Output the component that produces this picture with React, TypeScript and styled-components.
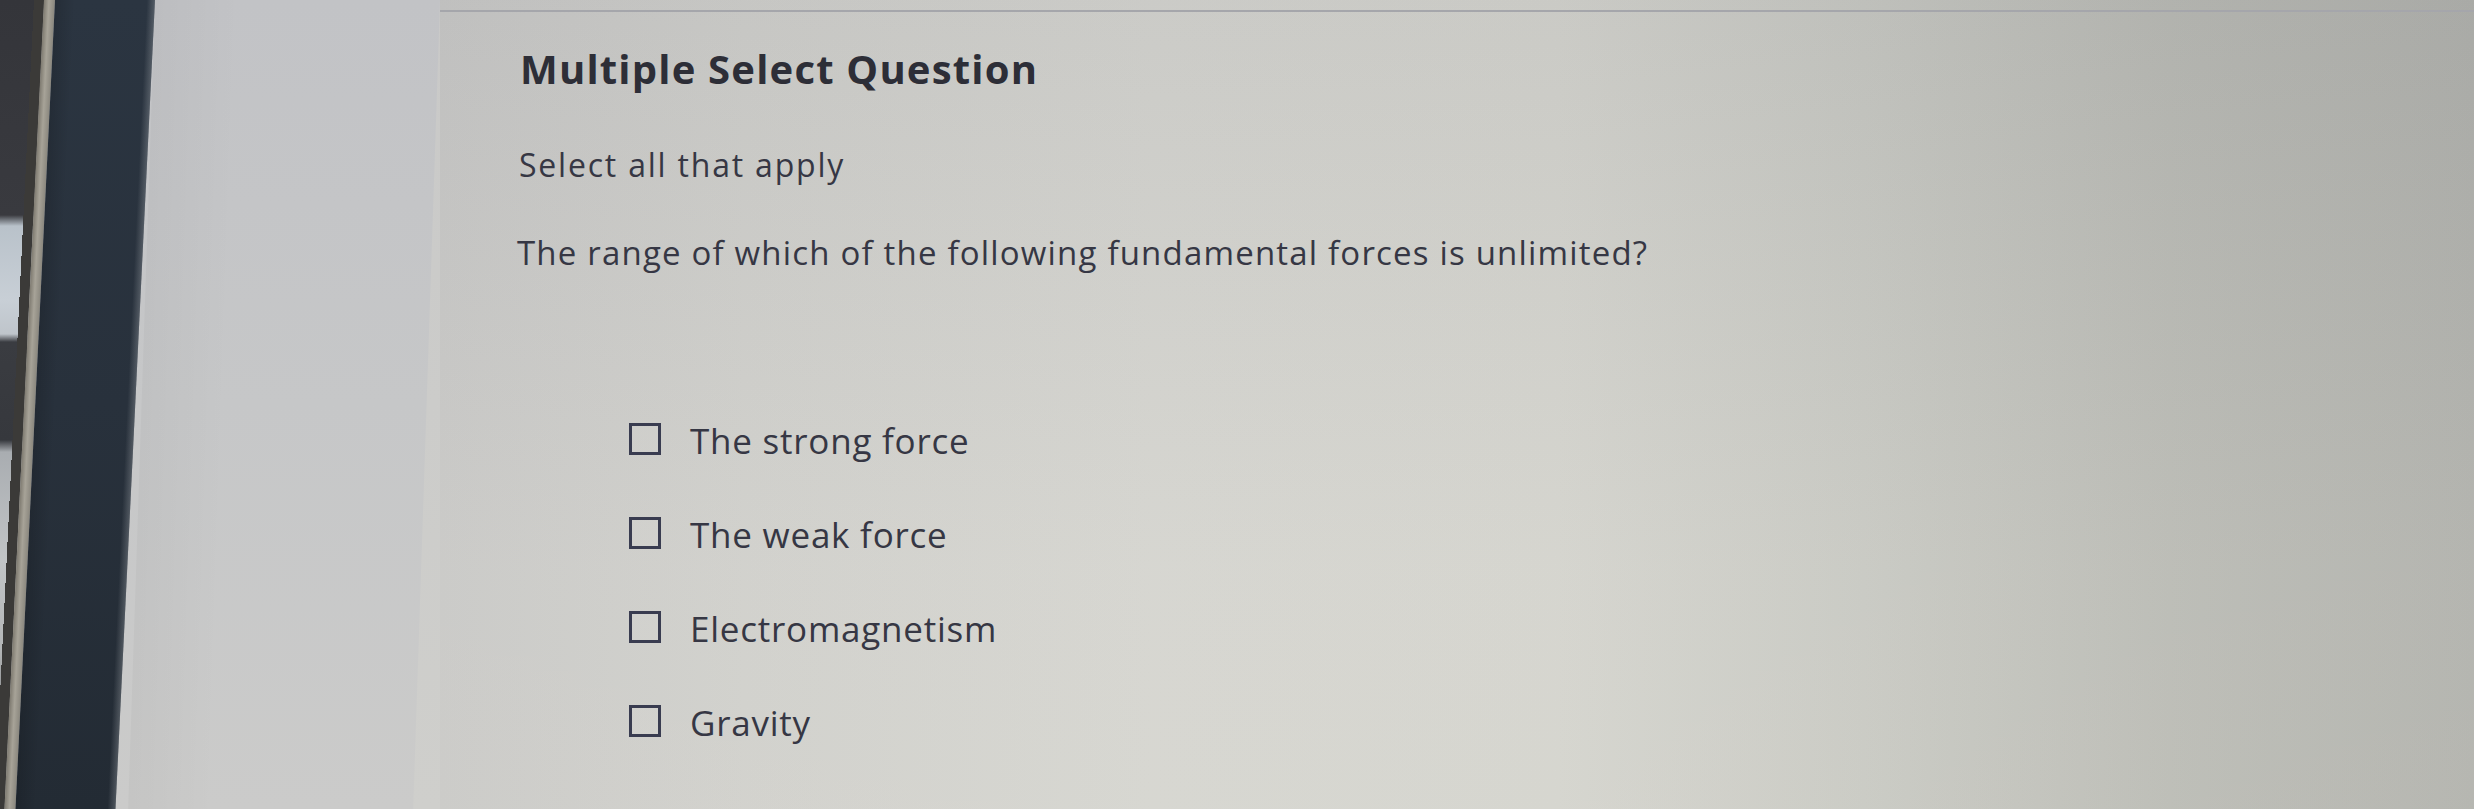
import React from "react";
import styled, { createGlobalStyle } from "styled-components";

const GlobalStyle = createGlobalStyle`
  html, body {
    margin: 0;
    padding: 0;
    width: 2474px;
    height: 809px;
    overflow: hidden;
    background: #cdcdcb;
  }
  #root {
    height: 809px;
  }
`;

const Screen = styled.div`
  display: flex;
  width: 2474px;
  height: 809px;
  overflow: hidden;
  font-family: "Open Sans", "Lato", "Liberation Sans", sans-serif;
`;

const SideFrame = styled.div`
  flex: 0 0 440px;
  height: 809px;
  overflow: hidden;
  background: linear-gradient(to bottom, #c9c9c8 0%, #cfcfcc 100%);
`;

const Panel = styled.div`
  display: flex;
  width: 440px;
  height: 809px;
  transform: skewX(-1.9deg);
  transform-origin: top left;
  background: linear-gradient(to bottom, #c2c3c6 0%, #c6c7c8 50%, #cbcbca 100%);
`;

const Bezel = styled.div`
  display: flex;
  flex: 0 0 155px;
  height: 809px;
  transform: skewX(-0.9deg);
  transform-origin: top left;
`;

const BezelEdge = styled.div`
  flex: 0 0 44px;
  background:
    linear-gradient(to right, transparent 0 34px, #3b3a38 34px 44px),
    linear-gradient(
      to bottom,
      #34353a 0px,
      #393a3f 215px,
      #b9c2ca 226px,
      #c8cfd6 300px,
      #bfc5cb 334px,
      #3a3c41 342px,
      #36383d 440px,
      #a9adb1 452px,
      #c1c4c6 560px,
      #b3b5b6 650px,
      #8d8f91 700px,
      #6d6f72 809px
    );
`;

const BezelStrip = styled.div`
  flex: 0 0 11px;
  background: linear-gradient(to right, #7e7a70 0%, #a7a398 45%, #8a877e 100%);
`;

const BezelBand = styled.div`
  flex: 0 0 100px;
  background:
    linear-gradient(to right, rgba(0, 0, 0, 0.15) 0%, transparent 20%, transparent 92%, rgba(160, 165, 170, 0.35) 100%),
    linear-gradient(to bottom, #2b3541 0%, #28313c 50%, #232b34 100%);
`;

const PanelFill = styled.div`
  flex: 1 1 auto;
  background: linear-gradient(to right, rgba(0, 0, 0, 0.03) 0%, transparent 30%);
`;

const Main = styled.main`
  flex: 1 1 auto;
  height: 809px;
  padding-top: 10px;
  box-sizing: border-box;
  background:
    linear-gradient(to bottom, rgba(60, 60, 60, 0.06) 0%, rgba(255, 250, 225, 0.06) 70%, rgba(255, 250, 225, 0.08) 100%),
    linear-gradient(
      to right,
      #c8c8c7 0%,
      #cfcfcc 15%,
      #d4d4d0 35%,
      #d3d3ce 55%,
      #c7c8c3 70%,
      #b9bab5 85%,
      #b0b1ad 100%
    );
`;

const Content = styled.section`
  height: 100%;
  box-sizing: border-box;
  border-top: 2px solid #a5a6ab;
  padding: 33px 0 0 80px;
  display: flex;
  flex-direction: column;
`;

const Title = styled.h1`
  margin: 0;
  font-size: 40px;
  line-height: 48px;
  font-weight: 700;
  color: #2d2e37;
  letter-spacing: 0.03em;
`;

const Instruction = styled.p`
  margin: 53px 0 0 -1px;
  font-size: 32px;
  line-height: 38px;
  font-weight: 400;
  color: #363744;
  letter-spacing: 0.056em;
`;

const Prompt = styled.p`
  margin: 49px 0 0 -3px;
  font-size: 33px;
  line-height: 40px;
  font-weight: 400;
  color: #363744;
  letter-spacing: 0.036em;
`;

const OptionList = styled.ul`
  list-style: none;
  margin: 147px 0 0 109px;
  padding: 0;
  display: flex;
  flex-direction: column;
  gap: 52px;
`;

const OptionRow = styled.li`
  display: flex;
  align-items: flex-end;
  gap: 29px;
  height: 42px;
`;

const Box = styled.span`
  flex: 0 0 32px;
  width: 32px;
  height: 32px;
  box-sizing: border-box;
  border: 3.5px solid #393c50;
  margin-bottom: 7px;
  background: rgba(255, 255, 255, 0.05);
`;

const OptionLabel = styled.span`
  font-size: 35px;
  line-height: 42px;
  color: #363744;
  letter-spacing: 0.022em;
`;

const options = ["The strong force", "The weak force", "Electromagnetism", "Gravity"];

export default function App() {
  return (
    <>
      <GlobalStyle />
      <Screen>
        <SideFrame>
          <Panel>
            <Bezel>
              <BezelEdge />
              <BezelStrip />
              <BezelBand />
            </Bezel>
            <PanelFill />
          </Panel>
        </SideFrame>
        <Main>
          <Content>
            <Title>Multiple Select Question</Title>
            <Instruction>Select all that apply</Instruction>
            <Prompt>The range of which of the following fundamental forces is unlimited?</Prompt>
            <OptionList>
              {options.map((o) => (
                <OptionRow key={o}>
                  <Box />
                  <OptionLabel>{o}</OptionLabel>
                </OptionRow>
              ))}
            </OptionList>
          </Content>
        </Main>
      </Screen>
    </>
  );
}
